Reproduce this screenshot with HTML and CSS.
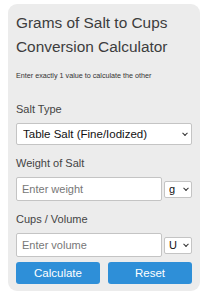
FILE: index.html
```html
<!DOCTYPE html>
<html lang="en">
<head>
<meta charset="utf-8">
<title>Grams of Salt to Cups Conversion Calculator</title>
<link rel="stylesheet" href="styles.css">
</head>
<body>
<div class="card">
  <h1 class="title">Grams of Salt to Cups Conversion Calculator</h1>
  <p class="hint">Enter exactly 1 value to calculate the other</p>
  <div class="group first">
    <label class="label" for="type">Salt Type</label>
    <span class="sel-wrap full">
      <select id="type" class="select-full">
        <option>Table Salt (Fine/Iodized)</option>
        <option>Kosher Salt</option>
        <option>Sea Salt</option>
      </select>
    </span>
  </div>
  <div class="group">
    <label class="label" for="weight">Weight of Salt</label>
    <div class="row">
      <input id="weight" class="field" type="text" placeholder="Enter weight">
      <span class="sel-wrap small">
        <select class="unit"><option>g</option><option>kg</option></select>
      </span>
    </div>
  </div>
  <div class="group">
    <label class="label" for="volume">Cups / Volume</label>
    <div class="row">
      <input id="volume" class="field" type="text" placeholder="Enter volume">
      <span class="sel-wrap small">
        <select class="unit"><option>US cups</option><option>tbsp</option></select>
      </span>
    </div>
  </div>
  <div class="buttons">
    <button class="btn">Calculate</button>
    <button class="btn">Reset</button>
  </div>
</div>
</body>
</html>
```
FILE: styles.css
```css
html, body {
  margin: 0;
  padding: 0;
  background: #ffffff;
}
body {
  padding: 4px 0 0 8px;
  font-family: "Liberation Sans", Arial, sans-serif;
  color: #333333;
}
.card {
  width: 192px;
  box-sizing: border-box;
  background: #ececec;
  border-radius: 9px;
  padding: 7px 8px 7px 8px;
}
.title {
  margin: 0;
  font-size: 15.4px;
  line-height: 24px;
  font-weight: normal;
  color: #3d3d3d;
}
.hint {
  margin: 12px 0 0 0;
  font-size: 7.2px;
  line-height: 10px;
  color: #333333;
}
.group {
  margin-top: 11px;
}
.group.first {
  margin-top: 21px;
}
.label {
  display: block;
  font-size: 11px;
  line-height: 14px;
  margin-bottom: 7px;
  color: #444444;
}
.sel-wrap {
  position: relative;
  display: block;
}
.sel-wrap.small {
  flex: none;
  width: 28px;
}
.sel-wrap::after {
  content: "";
  position: absolute;
  top: 50%;
  width: 3px;
  height: 3px;
  border-right: 1.2px solid #333333;
  border-bottom: 1.2px solid #333333;
  transform: translateY(-70%) rotate(45deg);
  pointer-events: none;
}
.sel-wrap.full::after {
  right: 5px;
}
.sel-wrap.small::after {
  right: 4px;
}
.select-full {
  appearance: none;
  -webkit-appearance: none;
  display: block;
  width: 100%;
  height: 22px;
  box-sizing: border-box;
  border: 1px solid #c4c4c4;
  border-radius: 2px;
  background: #ffffff;
  font-family: "Liberation Sans", Arial, sans-serif;
  font-size: 11.5px;
  color: #111111;
  padding: 0 14px 0 6px;
  margin: 0;
}
.row {
  display: flex;
  align-items: center;
  gap: 2px;
}
.field {
  flex: 1;
  min-width: 0;
  height: 24px;
  box-sizing: border-box;
  border: 1px solid #c4c4c4;
  border-radius: 2px;
  background: #ffffff;
  font-family: "Liberation Sans", Arial, sans-serif;
  font-size: 11px;
  padding: 0 0 0 5px;
  margin: 0;
}
.field::placeholder {
  color: #777777;
}
.unit {
  appearance: none;
  -webkit-appearance: none;
  display: block;
  width: 28px;
  height: 17px;
  box-sizing: border-box;
  border: 1px solid #c4c4c4;
  border-radius: 2px;
  background: #ffffff;
  font-family: "Liberation Sans", Arial, sans-serif;
  font-size: 11px;
  line-height: 15px;
  color: #111111;
  padding: 0 14px 0 4px;
  margin: 0;
  overflow: hidden;
  white-space: nowrap;
}
.buttons {
  display: grid;
  grid-template-columns: 1fr 1fr;
  gap: 8px;
  margin-top: 5px;
}
.btn {
  height: 22px;
  border: none;
  border-radius: 3px;
  background: #2e8fd8;
  color: #ffffff;
  font-family: "Liberation Sans", Arial, sans-serif;
  font-size: 11.5px;
  padding: 0;
  margin: 0;
}
```
